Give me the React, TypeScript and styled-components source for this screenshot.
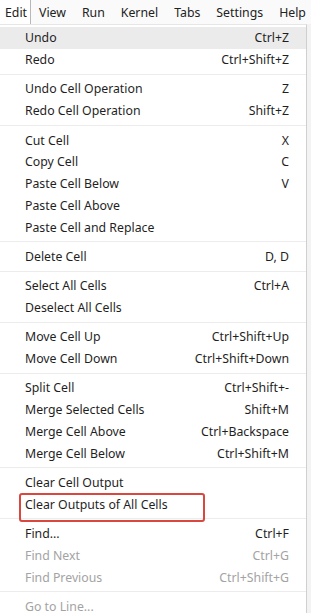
import React from 'react'
import styled, { createGlobalStyle } from 'styled-components'

const GlobalStyle = createGlobalStyle`
  html, body {
    margin: 0;
    padding: 0;
    background: #f3f3f3;
  }
  * {
    box-sizing: border-box;
  }
`

const Page = styled.div`
  width: 311px;
  height: 613px;
  overflow: hidden;
  font-family: 'Noto Sans', 'Open Sans', sans-serif;
  font-size: 12.3px;
  color: #1f1f1f;
  background: #f3f3f3;
`

const MenuBar = styled.div`
  display: flex;
  align-items: center;
  height: 24px;
  background: #fafafa;
  font-size: 12.3px;
`

const Tab = styled.div<{ $active?: boolean }>`
  height: 24px;
  display: flex;
  align-items: center;
  padding: ${({ $active }) => ($active ? '0 3px 0 5px' : '0 8px')};
  background: ${({ $active }) => ($active ? '#ffffff' : 'transparent')};
  border-right: ${({ $active }) => ($active ? '1px solid #b8b8b8' : 'none')};
  color: #222;
  white-space: nowrap;
`

const Dropdown = styled.div`
  width: 307px;
  background: #ffffff;
  border-right: 1px solid #cfcfcf;
  border-top: 1px solid #e6e6e6;
  padding-top: 2px;
`

const Item = styled.div<{ $active?: boolean; $disabled?: boolean }>`
  height: 21.75px;
  display: flex;
  align-items: center;
  justify-content: space-between;
  padding: 0 17px 0 25px;
  background: ${({ $active }) => ($active ? '#ebebeb' : 'transparent')};
  color: ${({ $disabled }) => ($disabled ? '#a3a3a3' : '#1f1f1f')};
  white-space: nowrap;
`

const Label = styled.span<{ $marked?: boolean }>`
  position: relative;
  &::after {
    content: '';
    display: ${({ $marked }) => ($marked ? 'block' : 'none')};
    position: absolute;
    left: -6px;
    top: -3px;
    width: 182px;
    height: 25px;
    border: 2px solid #d9473f;
    border-radius: 3px;
  }
`

const Separator = styled.div`
  height: 1px;
  background: #ececec;
  margin: 3.4px 0 3.2px;
`

type Entry = { label: string; key?: string; disabled?: boolean; active?: boolean; marked?: boolean }

const groups: Entry[][] = [
  [
    { label: 'Undo', key: 'Ctrl+Z', active: true },
    { label: 'Redo', key: 'Ctrl+Shift+Z' },
  ],
  [
    { label: 'Undo Cell Operation', key: 'Z' },
    { label: 'Redo Cell Operation', key: 'Shift+Z' },
  ],
  [
    { label: 'Cut Cell', key: 'X' },
    { label: 'Copy Cell', key: 'C' },
    { label: 'Paste Cell Below', key: 'V' },
    { label: 'Paste Cell Above' },
    { label: 'Paste Cell and Replace' },
  ],
  [{ label: 'Delete Cell', key: 'D, D' }],
  [
    { label: 'Select All Cells', key: 'Ctrl+A' },
    { label: 'Deselect All Cells' },
  ],
  [
    { label: 'Move Cell Up', key: 'Ctrl+Shift+Up' },
    { label: 'Move Cell Down', key: 'Ctrl+Shift+Down' },
  ],
  [
    { label: 'Split Cell', key: 'Ctrl+Shift+-' },
    { label: 'Merge Selected Cells', key: 'Shift+M' },
    { label: 'Merge Cell Above', key: 'Ctrl+Backspace' },
    { label: 'Merge Cell Below', key: 'Ctrl+Shift+M' },
  ],
  [
    { label: 'Clear Cell Output' },
    { label: 'Clear Outputs of All Cells', marked: true },
  ],
  [
    { label: 'Find...', key: 'Ctrl+F' },
    { label: 'Find Next', key: 'Ctrl+G', disabled: true },
    { label: 'Find Previous', key: 'Ctrl+Shift+G', disabled: true },
  ],
  [{ label: 'Go to Line...', disabled: true }],
]

const tabs = ['Edit', 'View', 'Run', 'Kernel', 'Tabs', 'Settings', 'Help']

export default function App() {
  return (
    <Page>
      <GlobalStyle />
      <MenuBar>
        {tabs.map((t, i) => (
          <Tab key={t} $active={i === 0}>
            {t}
          </Tab>
        ))}
      </MenuBar>
      <Dropdown>
        {groups.map((g, gi) => (
          <React.Fragment key={gi}>
            {gi > 0 && <Separator />}
            {g.map((e) => (
              <Item key={e.label} $active={e.active} $disabled={e.disabled}>
                <Label $marked={e.marked}>{e.label}</Label>
                {e.key && <span>{e.key}</span>}
              </Item>
            ))}
          </React.Fragment>
        ))}
      </Dropdown>
    </Page>
  )
}
